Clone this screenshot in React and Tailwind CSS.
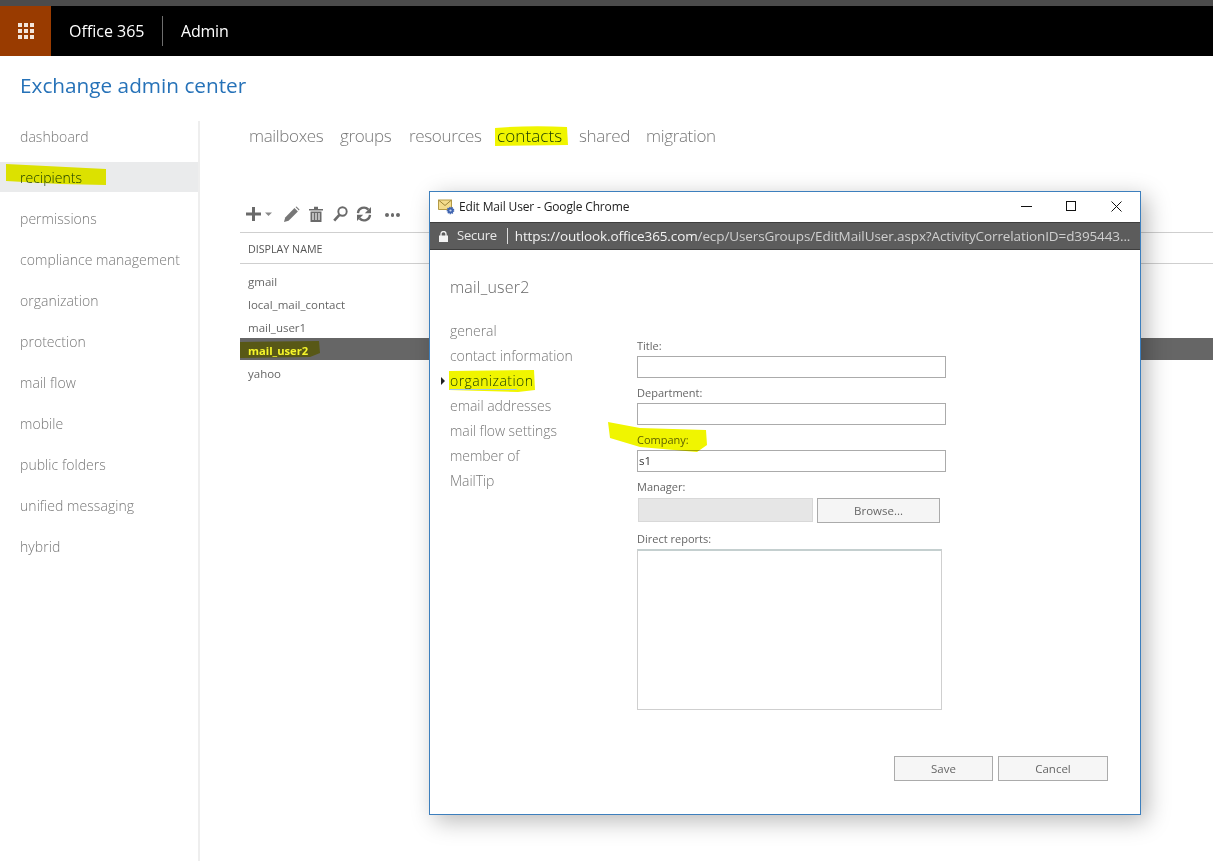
import React from "react";

function Waffle() {
  return (
    <svg width="16" height="16" viewBox="0 0 16 16" fill="#f3e6dc">
      {[0, 6, 12].map((y) =>
        [0, 6, 12].map((x) => <rect key={`${x}-${y}`} x={x} y={y} width="4" height="4" />)
      )}
    </svg>
  );
}

function MailIcon() {
  return (
    <svg width="17" height="16" viewBox="0 0 17 16">
      <path d="M0.5 1h13v9.5h-13z" fill="#f3dc8c" stroke="#b59a45" />
      <path d="M0.5 1l6.5 5.5L13.5 1" fill="none" stroke="#9c8437" />
      <circle cx="12.5" cy="11.5" r="3" fill="#3f64b0" stroke="#3f64b0" strokeWidth="1.6" strokeDasharray="1.2 0.9" />
      <circle cx="12.5" cy="11.5" r="1.1" fill="#c9d6ef" />
    </svg>
  );
}

function Toolbar() {
  return (
    <div className="flex items-center h-[24px] text-[#6a6a6a]">
      <svg width="28" height="16" viewBox="0 0 28 16" className="ml-[6px]">
        <path d="M7.5 1v14M0 8h15" stroke="#6a6a6a" strokeWidth="3" fill="none" />
        <path d="M19 6.5h7l-3.5 3.5z" fill="#8a8a8a" />
      </svg>
      <svg width="17" height="17" viewBox="0 0 17 17" className="ml-[9px]">
        <path d="M1 16l1.2-4.6L11.5 2l3.4 3.4-9.3 9.4z" fill="#777" />
        <path d="M12.5 1l1-.6 3 3-.6 1z" fill="#777" />
      </svg>
      <svg width="14" height="16" viewBox="0 0 14 16" className="ml-[9px]">
        <path d="M0 3h14v1.4H0zM5 .8h4V3H5z" fill="#6a6a6a" />
        <path d="M1.5 5.5h11V16h-11z" fill="#6a6a6a" />
        <path d="M4 7v7M7 7v7M10 7v7" stroke="#fff" strokeWidth="1.1" />
      </svg>
      <svg width="15" height="16" viewBox="0 0 15 16" className="ml-[10px]">
        <circle cx="9.5" cy="5.5" r="4.2" fill="none" stroke="#6a6a6a" strokeWidth="1.9" />
        <path d="M6.4 8.8L1.2 14.6" stroke="#6a6a6a" strokeWidth="2.6" />
      </svg>
      <svg width="16" height="16" viewBox="0 0 16 16" className="ml-[8px]">
        <path d="M2 7.2A6 6 0 0 1 12.4 3.6" fill="none" stroke="#6a6a6a" strokeWidth="2.4" />
        <path d="M15 1v6.2H8.8z" fill="#6a6a6a" />
        <path d="M14 8.8A6 6 0 0 1 3.6 12.4" fill="none" stroke="#6a6a6a" strokeWidth="2.4" />
        <path d="M1 15V8.8h6.2z" fill="#6a6a6a" />
      </svg>
      <div className="ml-[13px] flex gap-[2px] mt-[2px]">
        <span className="w-[3.5px] h-[3.5px] rounded-full bg-[#6a6a6a]" />
        <span className="w-[3.5px] h-[3.5px] rounded-full bg-[#6a6a6a]" />
        <span className="w-[3.5px] h-[3.5px] rounded-full bg-[#6a6a6a]" />
      </div>
    </div>
  );
}

const side = ["dashboard", "recipients", "permissions", "compliance management", "organization", "protection", "mail flow", "mobile", "public folders", "unified messaging", "hybrid"];
const tabs = [["mailboxes", "w-[91px]"], ["groups", "w-[69px]"], ["resources", "w-[88px]"], ["contacts", "w-[82px]"], ["shared", "w-[67px]"], ["migration", "w-[90px]"]];
const rows = ["gmail", "local_mail_contact", "mail_user1", "mail_user2", "yahoo"];
const dnav = ["general", "contact information", "organization", "email addresses", "mail flow settings", "member of", "MailTip"];

function Field({ label, value, mt = "" }) {
  return (
    <div className={mt}>
      <div className="h-[16px] text-[11px] leading-[18px] text-[#666]">{label}</div>
      <div className="mt-[3px] h-[22px] w-[309px] border border-[#ababab] bg-white text-[11.5px] leading-[20px] pl-[1px] text-[#333]">{value}</div>
    </div>
  );
}

export default function App() {
  return (
    <div className="relative w-[1213px] h-[861px] overflow-hidden bg-white text-[#777] font-['Open_Sans','Noto_Sans',sans-serif]">
      <div className="h-[6px] bg-[#4b4b4b]" />
      <header className="h-[50px] bg-black flex items-center text-white">
        <div className="w-[51px] h-full bg-[#993b00] flex items-center justify-center"><Waffle /></div>
        <span className="ml-[18px] w-[93px] text-[16px]">Office 365</span>
        <span className="w-px h-[30px] bg-[#6e6e6e]" />
        <span className="ml-[18px] text-[16px] tracking-[-0.2px]">Admin</span>
      </header>
      <h1 className="h-[65px] pl-[20px] pt-[14px] text-[20.75px] leading-[30px] font-normal text-[#2672b8]">Exchange admin center</h1>

      <div className="flex h-[740px]">
        <nav className="w-[200px] border-r-2 border-[#eeeeee] shrink-0">
          {side.map((s) => (
            <div key={s} className={`h-[30px] mb-[11px] pl-[20px] text-[14px] leading-[32px] font-light tracking-[0.05px] ${s === "recipients" ? "bg-[#eaebec] text-[#1e4008]" : "text-[#777]"}`}>{s}</div>
          ))}
        </nav>
        <main className="flex-1 pl-[40px]">
          <div className="flex pl-[9px] h-[30px] pt-[1px] text-[17px] leading-[28px] font-light text-[#777] tracking-[-0.35px]">
            {tabs.map(([t, w]) => (
              <span key={t} className={`${w} ${t === "contacts" ? "text-[#1e4008] tracking-[0.1px]" : ""}`}>{t}</span>
            ))}
          </div>
          <div className="mt-[51px]"><Toolbar /></div>
          <div className="mt-[6px] border-y border-[#cfcfcf] h-[32px] pl-[8px] text-[10.7px] leading-[32px] text-[#555]">DISPLAY NAME</div>
          <div className="pt-[5px]">
            {rows.map((r) => (
              <div key={r} className={`relative pl-[8px] text-[11.5px] ${r === "mail_user2" ? "h-[22px] mb-[1px] leading-[25px] bg-[#666666] text-[#f6f62a] font-bold" : "h-[23px] leading-[26px] text-[#666]"}`}>
                {r === "mail_user2" && (
                  <svg className="absolute left-0 top-[2px]" width="84" height="20" viewBox="0 0 84 20">
                    <path d="M0 2L79 1L80 13L70 17L0 18z" fill="#585816" />
                  </svg>
                )}
                <span className={`relative ${r === "mail_user2" ? "text-[11.2px]" : ""}`}>{r}</span>
              </div>
            ))}
          </div>
        </main>
      </div>

      {/* Highlighter strokes on the page */}
      <svg className="absolute left-0 top-0 pointer-events-none mix-blend-multiply" width="1213" height="861" viewBox="0 0 1213 861">
        <g fill="#f0f500">
          <path d="M6 164L106 169L106 185L60 184L6 181z" />
          <path d="M495 128Q530 125 567 127L568 145L495 146z" />
        </g>
      </svg>

      {/* Popup window */}
      <section className="absolute left-[429px] top-[191px] w-[712px] h-[624px] bg-white border border-[#3d7fbd] shadow-[6px_6px_22px_rgba(0,0,0,0.28)] flex flex-col">
        <div className="h-[30px] shrink-0 flex items-center pl-[8px] text-[12px] text-[#222]">
          <MailIcon />
          <span className="ml-[4px] tracking-[-0.15px]">Edit Mail User - Google Chrome</span>
          <div className="ml-auto flex items-center mb-[2px]">
            <span className="w-[11px] h-px bg-[#111]" />
            <span className="ml-[34px] w-[10px] h-[10px] border border-[#111]" />
            <svg width="11" height="11" viewBox="0 0 11 11" className="ml-[35px] mr-[18px]"><path d="M.5.5l10 10M10.5.5l-10 10" stroke="#111" strokeWidth="1" fill="none" /></svg>
          </div>
        </div>
        <div className="h-[28px] shrink-0 bg-[#5c5c5c] border-y border-[#3e3e3e] flex items-center pl-[9px] text-[13px] whitespace-nowrap overflow-hidden">
          <svg width="9" height="11" viewBox="0 0 9 11"><path d="M0 4.5h9V11H0z" fill="#f3f3f3" /><path d="M2 5V3a2.5 2.5 0 0 1 5 0v2" fill="none" stroke="#f3f3f3" strokeWidth="1.3" /></svg>
          <span className="ml-[9px] text-[#e8e8e8] tracking-[-0.25px]">Secure</span>
          <span className="ml-[10px] w-px h-[16px] bg-[#dddddd]" />
          <span className="ml-[7px] text-[13.5px] tracking-[-0.11px] text-[#cfcfcf]"><span className="text-[#f2f2f2]">https://outlook.office365.com</span>/ecp/UsersGroups/EditMailUser.aspx?ActivityCorrelationID=d395443...</span>
        </div>
        <div className="pl-[20px] pt-[25px] text-[16px] leading-[24px] font-light text-[#666] h-[64px] shrink-0 tracking-[0.2px]">mail_user2</div>
        <div className="flex">
          <ul className="w-[207px] pl-[20px] shrink-0 pt-[4px] text-[14px] leading-[25px] font-light text-[#777] tracking-[-0.05px]">
            {dnav.map((d) => (
              <li key={d} className={`relative ${d === "organization" ? "text-[#1e4008] tracking-[0.45px]" : ""}`}>
                {d === "organization" && <span className="absolute left-[-9px] top-[9px] border-y-[4px] border-y-transparent border-l-[4px] border-l-[#222]" />}
                {d}
              </li>
            ))}
          </ul>
          <div className="flex-1 pt-[23px]">
            <Field label="Title:" />
            <Field label="Department:" mt="mt-[6px]" />
            <Field label="Company:" value="s1" mt="mt-[6px]" />
            <div className="mt-[6px] h-[16px] text-[11px] leading-[18px] text-[#666]">Manager:</div>
            <div className="mt-[4px] flex pl-[1px]">
              <div className="w-[175px] h-[24px] bg-[#e6e6e6] border border-[#d8d8d8]" />
              <button className="ml-[4px] w-[123px] h-[25px] bg-[#f5f5f5] border border-[#ababab] text-[11.5px] text-[#666]">Browse...</button>
            </div>
            <div className="mt-[7px] h-[16px] text-[11px] leading-[18px] text-[#666]">Direct reports:</div>
            <div className="mt-[3px] w-[305px] h-[161px] border border-[#cfcfcf] border-t-2 border-t-[#c4cfcf]" />
            <div className="mt-[46px] flex pl-[257px] gap-[5px]">
              <button className="w-[99px] h-[25px] bg-[#f6f6f6] border border-[#ababab] text-[11.5px] text-[#666]">Save</button>
              <button className="w-[110px] h-[25px] bg-[#f6f6f6] border border-[#ababab] text-[11.5px] text-[#666]">Cancel</button>
            </div>
          </div>
        </div>
      </section>

      {/* Highlighter strokes on the popup */}
      <svg className="absolute left-0 top-0 pointer-events-none mix-blend-multiply" width="1213" height="861" viewBox="0 0 1213 861">
        <g fill="#f0f500">
          <path d="M449 371L534 370L535 390L518 392L449 390z" />
          <path d="M608 422L640 428L706 430L707 445L697 452L640 447L610 438z" />
        </g>
        <path d="M450 389.5H517" stroke="#9cc4e8" strokeWidth="1" fill="none" />
      </svg>
    </div>
  );
}
